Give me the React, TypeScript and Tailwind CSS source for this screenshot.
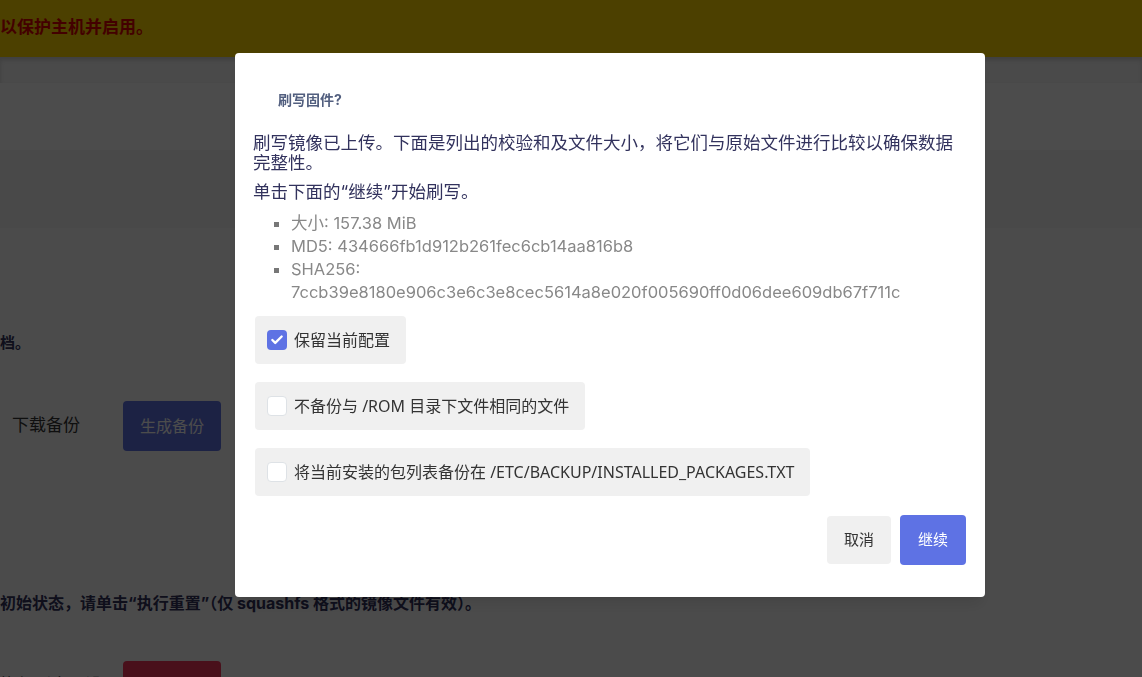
import { Check } from 'lucide-react';

const font = "font-['Inter','Noto_Sans_CJK_SC',sans-serif]";

function Option({ checked, label }: { checked?: boolean; label: string }) {
  return (
    <label className="flex h-[48px] items-center gap-[7px] rounded bg-[#f0f0f0] pl-3 pr-4">
      {checked ? (
        <span className="flex h-[20px] w-[20px] items-center justify-center rounded-[4px] bg-[#5e72e4]">
          <Check className="h-[14px] w-[14px] text-white" strokeWidth={4} />
        </span>
      ) : (
        <span className="h-[20px] w-[20px] rounded-[4px] border border-[#dee2e6] bg-white" />
      )}
      <span className="font-['Noto_Sans','Noto_Sans_CJK_SC',sans-serif] text-[16px] text-[#333]">{label}</span>
    </label>
  );
}

function FlashDialog() {
  const info = [
    '大小: 157.38 MiB',
    'MD5: 434666fb1d912b261fec6cb14aa816b8',
    'SHA256: 7ccb39e8180e906c3e6c3e8cec5614a8e020f005690ff0d06dee609db67f711c',
  ];

  return (
    <div className="fixed inset-0 bg-black/70">
      <div className="ml-[235px] mt-[53px] w-[750px] rounded bg-white shadow-lg">
        <h4 className="px-[43px] pt-[37px] text-[14px] font-bold leading-[20px] text-[#525f7f]">刷写固件?</h4>
        <div className="px-[18px] pt-[23px] text-[17.5px] leading-[20px] text-[#32325d]">
          <p>刷写镜像已上传。下面是列出的校验和及文件大小，将它们与原始文件进行比较以确保数据完整性。</p>
          <p className="mt-[9px]">单击下面的“继续”开始刷写。</p>
          <ul className="mt-[10px] list-[square] pl-[38px] text-[16.5px] leading-[23px] text-[#888] marker:text-[#777]">
            {info.map((line) => (
              <li key={line} className="w-[640px] break-words">
                {line}
              </li>
            ))}
          </ul>
        </div>
        <div className="mt-[12px] flex flex-col items-start gap-[18px] px-[20px]">
          <Option checked label="保留当前配置" />
          <Option label="不备份与 /ROM 目录下文件相同的文件" />
          <Option label="将当前安装的包列表备份在 /ETC/BACKUP/INSTALLED_PACKAGES.TXT" />
        </div>
        <div className="mt-[19px] flex items-center justify-end gap-[9px] pb-[32px] pr-[19px]">
          <button className="h-[48px] w-[64px] rounded bg-[#f0f0f0] text-[15px] text-[#333]">取消</button>
          <button className="h-[50px] w-[66px] rounded bg-[#5e72e4] text-[15px] text-white">继续</button>
        </div>
      </div>
    </div>
  );
}

export default function App() {
  return (
    <div className={`${font} relative min-h-[677px] overflow-hidden bg-[#fafafa]`}>
      <div className="flex h-[57px] items-center bg-[#fdd500] pb-[2px]">
        <span className="text-[17px] font-bold text-[#e00000]">以保护主机并启用。</span>
      </div>
      <div className="h-[26px] bg-[#f7f7f7] shadow-[inset_0_3px_4px_rgba(0,0,0,0.15)]" />
      <div className="h-[67px] bg-[#ffffff]" />
      <div className="h-[78px] bg-[#f4f4f4]" />
      <div className="pt-[104px]">
        <p className="text-[15px] font-bold leading-[22px] text-[#32325d]">档。</p>
        <div className="mt-[47px] flex items-center">
          <span className="w-[123px] pl-[12px] text-[17px] text-[#333]">下载备份</span>
          <button className="h-[50px] w-[98px] rounded bg-[#5e72e4] text-[16px] text-white">生成备份</button>
        </div>
        <p className="mt-[141px] text-[16px] font-bold leading-[22px] text-[#32325d]">
          初始状态，请单击“执行重置”（仅 squashfs 格式的镜像文件有效）。
        </p>
        <div className="mt-[47px] flex items-start">
          <span className="w-[123px] pt-[12px] text-[17px] text-[#333]">恢复到出厂设置</span>
          <button className="h-[50px] w-[98px] rounded bg-[#f5365c] text-[16px] text-white">执行重置</button>
        </div>
      </div>
      <FlashDialog />
    </div>
  );
}
